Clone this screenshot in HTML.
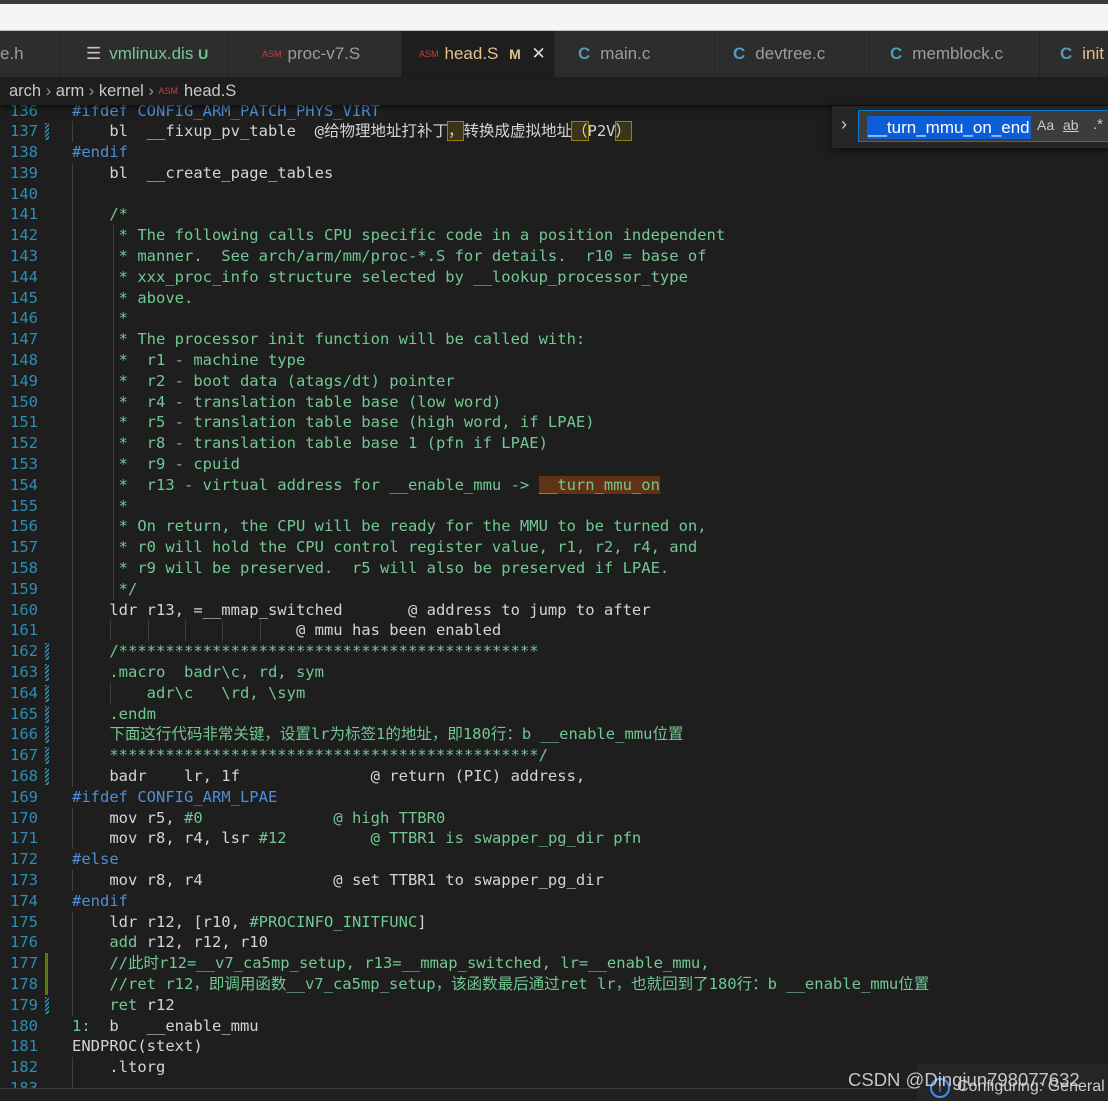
<!DOCTYPE html>
<html><head><meta charset="utf-8">
<style>
*{margin:0;padding:0;box-sizing:border-box}
html,body{width:1108px;height:1101px;overflow:hidden}
body{background:#1e1e1e;position:relative;font-family:"Liberation Sans","Noto Sans CJK SC",sans-serif}
#top{position:absolute;left:0;top:0;width:1108px;height:4px;background:#3a3a3a}
#white{position:absolute;left:0;top:4px;width:1108px;height:27px;background:#f5f5f5;border-bottom:1px solid #bbb}
#tabs{position:absolute;left:0;top:31px;width:1108px;height:46px;background:#252526}
.tab{position:absolute;top:0;height:46px;background:#2d2d2d;border-right:1px solid #252526;color:#9d9d9d;font-size:17px;line-height:46px;white-space:nowrap;overflow:hidden}
.tab .c{color:#519aba;font-weight:bold;margin-right:10px}
.asm{color:#cc3e44;font-size:9px;margin-right:6px;vertical-align:2px}
#crumb{position:absolute;left:0;top:77px;width:1108px;height:28px;background:#1e1e1e;color:#c8c8c8;font-size:16.5px;line-height:28px;padding-left:9px;box-shadow:0 3px 5px rgba(0,0,0,.55);z-index:3;white-space:nowrap}
#code{position:absolute;left:0;top:100.5px;width:1108px;font-family:"DejaVu Sans Mono","Noto Sans CJK SC",monospace;font-size:15.5px;line-height:20.8px;color:#d4d4d4}
.l{position:relative;height:20.8px}
.n{position:absolute;left:0;width:38px;text-align:right;color:#2b8fb3}
.t{position:absolute;left:72px;white-space:pre}
.g{color:#72c893}
.k{color:#4f8fd6}
.hl{background:#613214}
.bx{outline:1px solid #9a7d0a;background:#3b3517}
.st{position:absolute;left:45px;top:2px;width:4px;height:17px;background:repeating-linear-gradient(135deg,#2b8fb3 0 1.5px,transparent 1.5px 3px)}
.gb{position:absolute;left:45px;top:0;width:3px;height:20.8px;background:#587c0c}
.gd{position:absolute;top:0;width:1px;height:20.8px;background:#404040}
#find{position:absolute;left:832px;top:106px;width:290px;height:42px;background:#252526;box-shadow:0 2px 8px rgba(0,0,0,.6);z-index:4}
#find .inp{position:absolute;left:26px;top:4px;width:260px;height:32px;background:#3c3c3c;border:1px solid #007acc}
#find .sel{position:absolute;left:8px;top:5px;height:23px;background:#0b5ed7;color:#fff;font-size:17px;line-height:23px;padding:0 1px;white-space:nowrap}
#note{position:absolute;left:917px;top:1064px;width:200px;height:40px;background:#252526;z-index:5;color:#ccc;font-size:16px}
#wm{position:absolute;left:848px;top:1069px;color:#d8d8d8;font-size:18.5px;z-index:6;opacity:.9;white-space:nowrap}
#bline{position:absolute;left:0;top:1088px;width:917px;height:13px;background:#1f1f1f;border-top:1px solid #3a3a3a;z-index:2}
</style></head><body>
<div id="top"></div><div id="white"></div>
<div id="tabs">
<div class="tab" style="left:0;width:60px;padding-left:0">e.h</div>
<div class="tab" style="left:60px;width:168px;padding-left:26px;color:#73c991"><span style="color:#c5c5c5;margin-right:8px">☰</span>vmlinux.dis <span style="font-weight:bold;font-size:14px">U</span></div>
<div class="tab" style="left:228px;width:174px;padding-left:34px"><span class="asm">ASM</span>proc-v7.S</div>
<div class="tab" style="left:402px;width:153px;padding-left:17px;background:#1e1e1e;color:#e2c08d"><span class="asm">ASM</span>head.S <span style="font-weight:bold;font-size:14px;margin-left:6px">M</span> <span style="color:#ddd;margin-left:6px">✕</span></div>
<div class="tab" style="left:555px;width:160px;padding-left:23px"><span class="c">C</span>main.c</div>
<div class="tab" style="left:715px;width:155px;padding-left:18px"><span class="c">C</span>devtree.c</div>
<div class="tab" style="left:870px;width:170px;padding-left:20px"><span class="c">C</span>memblock.c</div>
<div class="tab" style="left:1040px;width:80px;padding-left:20px;color:#e2c08d"><span class="c">C</span>init</div>
</div>
<div id="crumb">arch <span style="color:#999">›</span> arm <span style="color:#999">›</span> kernel <span style="color:#999">›</span> <span class="asm">ASM</span>head.S</div>
<div id="find"><span style="position:absolute;left:9px;top:8px;color:#ccc;font-size:18px">›</span><div class="inp"><span class="sel">__turn_mmu_on_end</span><span style="position:absolute;left:178px;top:6px;color:#ccc;font-size:14px">Aa</span><span style="position:absolute;left:204px;top:6px;color:#ccc;font-size:14px;text-decoration:underline">ab</span><span style="position:absolute;left:234px;top:5px;color:#ccc;font-size:15px">.*</span></div></div>
<div id="code">
<div class="l"><span class="n">136</span><span class="t"><span class="k">#ifdef CONFIG_ARM_PATCH_PHYS_VIRT</span></span></div>
<div class="l"><span class="n">137</span><i class="st"></i><span class="gd" style="left:72px"></span><span class="t">    bl  __fixup_pv_table  @给物理地址打补丁<span class="bx">，</span>转换成虚拟地址<span class="bx">（</span>P2V<span class="bx">）</span></span></div>
<div class="l"><span class="n">138</span><span class="t"><span class="k">#endif</span></span></div>
<div class="l"><span class="n">139</span><span class="gd" style="left:72px"></span><span class="t">    bl  __create_page_tables</span></div>
<div class="l"><span class="n">140</span><span class="gd" style="left:72px"></span><span class="t"></span></div>
<div class="l"><span class="n">141</span><span class="gd" style="left:72px"></span><span class="t g">    /*</span></div>
<div class="l"><span class="n">142</span><span class="gd" style="left:72px"></span><span class="gd" style="left:113px"></span><span class="t g">     * The following calls CPU specific code in a position independent</span></div>
<div class="l"><span class="n">143</span><span class="gd" style="left:72px"></span><span class="gd" style="left:113px"></span><span class="t g">     * manner.  See arch/arm/mm/proc-*.S for details.  r10 = base of</span></div>
<div class="l"><span class="n">144</span><span class="gd" style="left:72px"></span><span class="gd" style="left:113px"></span><span class="t g">     * xxx_proc_info structure selected by __lookup_processor_type</span></div>
<div class="l"><span class="n">145</span><span class="gd" style="left:72px"></span><span class="gd" style="left:113px"></span><span class="t g">     * above.</span></div>
<div class="l"><span class="n">146</span><span class="gd" style="left:72px"></span><span class="gd" style="left:113px"></span><span class="t g">     *</span></div>
<div class="l"><span class="n">147</span><span class="gd" style="left:72px"></span><span class="gd" style="left:113px"></span><span class="t g">     * The processor init function will be called with:</span></div>
<div class="l"><span class="n">148</span><span class="gd" style="left:72px"></span><span class="gd" style="left:113px"></span><span class="t g">     *  r1 - machine type</span></div>
<div class="l"><span class="n">149</span><span class="gd" style="left:72px"></span><span class="gd" style="left:113px"></span><span class="t g">     *  r2 - boot data (atags/dt) pointer</span></div>
<div class="l"><span class="n">150</span><span class="gd" style="left:72px"></span><span class="gd" style="left:113px"></span><span class="t g">     *  r4 - translation table base (low word)</span></div>
<div class="l"><span class="n">151</span><span class="gd" style="left:72px"></span><span class="gd" style="left:113px"></span><span class="t g">     *  r5 - translation table base (high word, if LPAE)</span></div>
<div class="l"><span class="n">152</span><span class="gd" style="left:72px"></span><span class="gd" style="left:113px"></span><span class="t g">     *  r8 - translation table base 1 (pfn if LPAE)</span></div>
<div class="l"><span class="n">153</span><span class="gd" style="left:72px"></span><span class="gd" style="left:113px"></span><span class="t g">     *  r9 - cpuid</span></div>
<div class="l"><span class="n">154</span><span class="gd" style="left:72px"></span><span class="gd" style="left:113px"></span><span class="t g">     *  r13 - virtual address for __enable_mmu -&gt; <span class="hl">__turn_mmu_on</span></span></div>
<div class="l"><span class="n">155</span><span class="gd" style="left:72px"></span><span class="gd" style="left:113px"></span><span class="t g">     *</span></div>
<div class="l"><span class="n">156</span><span class="gd" style="left:72px"></span><span class="gd" style="left:113px"></span><span class="t g">     * On return, the CPU will be ready for the MMU to be turned on,</span></div>
<div class="l"><span class="n">157</span><span class="gd" style="left:72px"></span><span class="gd" style="left:113px"></span><span class="t g">     * r0 will hold the CPU control register value, r1, r2, r4, and</span></div>
<div class="l"><span class="n">158</span><span class="gd" style="left:72px"></span><span class="gd" style="left:113px"></span><span class="t g">     * r9 will be preserved.  r5 will also be preserved if LPAE.</span></div>
<div class="l"><span class="n">159</span><span class="gd" style="left:72px"></span><span class="gd" style="left:113px"></span><span class="t g">     */</span></div>
<div class="l"><span class="n">160</span><span class="gd" style="left:72px"></span><span class="t">    ldr r13, =__mmap_switched       @ address to jump to after</span></div>
<div class="l"><span class="n">161</span><span class="gd" style="left:72px"></span><span class="gd" style="left:110px"></span><span class="gd" style="left:148px"></span><span class="gd" style="left:185px"></span><span class="gd" style="left:222px"></span><span class="gd" style="left:260px"></span><span class="t">                        @ mmu has been enabled</span></div>
<div class="l"><span class="n">162</span><i class="st"></i><span class="gd" style="left:72px"></span><span class="t g">    /*********************************************</span></div>
<div class="l"><span class="n">163</span><i class="st"></i><span class="gd" style="left:72px"></span><span class="t g">    .macro  badr\c, rd, sym</span></div>
<div class="l"><span class="n">164</span><i class="st"></i><span class="gd" style="left:72px"></span><span class="gd" style="left:110px"></span><span class="t g">        adr\c   \rd, \sym</span></div>
<div class="l"><span class="n">165</span><i class="st"></i><span class="gd" style="left:72px"></span><span class="t g">    .endm</span></div>
<div class="l"><span class="n">166</span><i class="st"></i><span class="gd" style="left:72px"></span><span class="t g">    下面这行代码非常关键，设置lr为标签1的地址，即180行：b __enable_mmu位置</span></div>
<div class="l"><span class="n">167</span><i class="st"></i><span class="gd" style="left:72px"></span><span class="t g">    **********************************************/</span></div>
<div class="l"><span class="n">168</span><i class="st"></i><span class="gd" style="left:72px"></span><span class="t">    badr    lr, 1f              @ return (PIC) address,</span></div>
<div class="l"><span class="n">169</span><span class="t"><span class="k">#ifdef CONFIG_ARM_LPAE</span></span></div>
<div class="l"><span class="n">170</span><span class="gd" style="left:72px"></span><span class="t">    mov r5, <span class="g">#0</span>              <span class="g">@ high TTBR0</span></span></div>
<div class="l"><span class="n">171</span><span class="gd" style="left:72px"></span><span class="t">    mov r8, r4, lsr <span class="g">#12</span>         <span class="g">@ TTBR1 is swapper_pg_dir pfn</span></span></div>
<div class="l"><span class="n">172</span><span class="t"><span class="k">#else</span></span></div>
<div class="l"><span class="n">173</span><span class="gd" style="left:72px"></span><span class="t">    mov r8, r4              @ set TTBR1 to swapper_pg_dir</span></div>
<div class="l"><span class="n">174</span><span class="t"><span class="k">#endif</span></span></div>
<div class="l"><span class="n">175</span><span class="gd" style="left:72px"></span><span class="t">    ldr r12, [r10, <span class="g">#PROCINFO_INITFUNC</span>]</span></div>
<div class="l"><span class="n">176</span><span class="gd" style="left:72px"></span><span class="t">    <span class="g">add</span> r12, r12, r10</span></div>
<div class="l"><span class="n">177</span><i class="gb"></i><span class="gd" style="left:72px"></span><span class="t g">    //此时r12=__v7_ca5mp_setup, r13=__mmap_switched, lr=__enable_mmu,</span></div>
<div class="l"><span class="n">178</span><i class="gb"></i><span class="gd" style="left:72px"></span><span class="t g">    //ret r12，即调用函数__v7_ca5mp_setup，该函数最后通过ret lr，也就回到了180行：b __enable_mmu位置</span></div>
<div class="l"><span class="n">179</span><i class="st"></i><span class="gd" style="left:72px"></span><span class="t">    <span class="g">ret</span> r12</span></div>
<div class="l"><span class="n">180</span><span class="t"><span class="g">1:</span>  b   __enable_mmu</span></div>
<div class="l"><span class="n">181</span><span class="t">ENDPROC(stext)</span></div>
<div class="l"><span class="n">182</span><span class="gd" style="left:72px"></span><span class="t">    .ltorg</span></div>
<div class="l"><span class="n">183</span><span class="gd" style="left:72px"></span><span class="t"></span></div>
</div>
<div id="bline"></div>
<div id="note"><span style="position:absolute;left:13px;top:14px;width:20px;height:20px;border:2px solid #3794ff;border-radius:50%;color:#3794ff;font-size:13px;text-align:center;line-height:16px">i</span><span style="position:absolute;left:40px;top:14px;white-space:nowrap">Configuring: General</span></div>
<div id="wm">CSDN @Dingjun798077632</div>
</body></html>
